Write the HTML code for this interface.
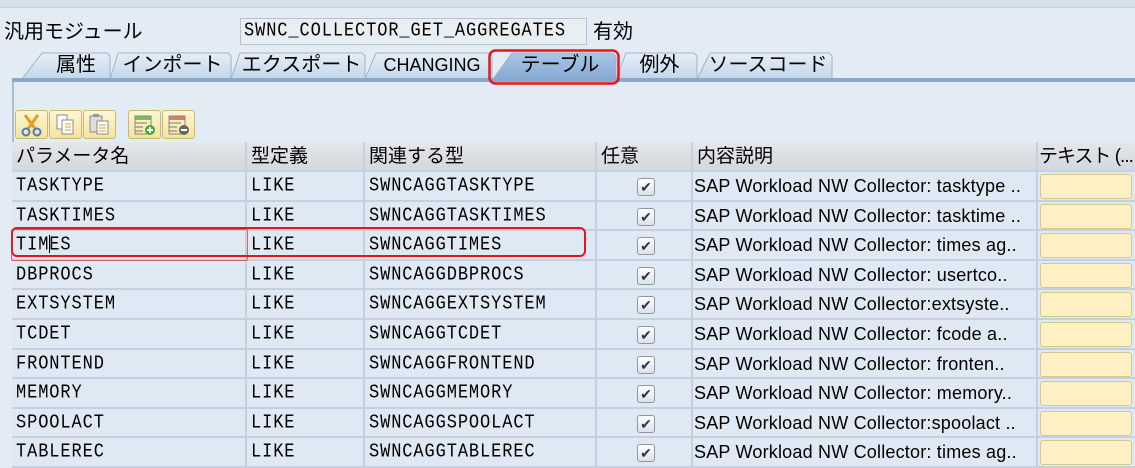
<!DOCTYPE html>
<html><head><meta charset="utf-8"><style>
*{margin:0;padding:0;box-sizing:border-box}
body{width:1135px;height:467px;overflow:hidden;background:#e3ecf5;position:relative;font-family:"Liberation Sans","Noto Sans CJK JP",sans-serif;color:#000}
.a{position:absolute;white-space:nowrap}
.mono{font-family:"Liberation Mono","Noto Sans CJK JP",monospace;font-size:17px;letter-spacing:0.9px;transform:scaleY(1.15);transform-origin:left center}
.tab{position:absolute;top:52px;height:27px;font-size:20px;line-height:27px;text-align:center}
.row{position:absolute;left:12px;width:1123px;height:29.6px;background:#dfe9f3;border-bottom:2px solid #c5d1dd}
.c{position:absolute;top:0;height:100%;border-right:2px solid #c5d1dd;line-height:28px;padding-left:4px;overflow:hidden;white-space:nowrap}
.hd .c{font-size:19px;line-height:29px;font-family:"Liberation Sans","Noto Sans CJK JP",sans-serif}
.desc{font-size:18px;letter-spacing:0.2px}
.cb{position:absolute;left:40px;top:6px;width:18px;height:18px;border:1px solid #8c97a3;border-radius:3px;background:linear-gradient(#fff,#dde2e8);font-size:14px;line-height:16px;text-align:center;color:#2a3550}
.yl{position:absolute;left:2px;top:2px;width:92px;height:25px;background:#fdf0c3;border:1px solid #d8c68a;border-radius:3px}
.btn{position:absolute;top:110px;width:33px;height:29px;background:linear-gradient(#fff7d4,#f4e3a0);border:1px solid #cdb870;border-radius:3px}
</style></head><body>
<div class="a" style="left:0;top:0;width:1135px;height:8px;background:#d5dfe9;border-bottom:1px solid #c3ced9"></div>
<div class="a" style="left:4px;top:18px;font-size:20px;line-height:28px">汎用モジュール</div>
<div class="a" style="left:240px;top:18px;width:347px;height:27px;border:1px solid #b9c3cd;background:#e9eef3"></div>
<div class="a mono" style="left:244px;top:19px;line-height:26px">SWNC_COLLECTOR_GET_AGGREGATES</div>
<div class="a" style="left:593px;top:18px;font-size:20px;line-height:28px">有効</div>

<svg class="a" style="left:0;top:0" width="1135" height="90">
<defs><linearGradient id="g" x1="0" y1="0" x2="0" y2="1"><stop offset="0" stop-color="#e6eef7"/><stop offset="1" stop-color="#c4d6ea"/></linearGradient>
<linearGradient id="g2" x1="0" y1="0" x2="0" y2="1"><stop offset="0" stop-color="#aac6e6"/><stop offset="1" stop-color="#86a9d2"/></linearGradient></defs>
<g stroke="#9fb3c8" stroke-width="1" fill="url(#g)">
<path d="M22 79 L42 53 L107 53 L110 56 L110 79Z"/>
<path d="M110 79 L118 53 L228 53 L231 56 L231 79Z"/>
<path d="M231 79 L240 53 L362 53 L365 56 L365 79Z"/>
<path d="M365 79 L376 53 L489 53 L492 56 L492 79Z"/>
<path d="M616 79 L626 53 L694 53 L697 56 L697 79Z"/>
<path d="M697 79 L710 53 L829 53 L832 56 L832 79Z"/>
<path d="M493 79 L512 53 L612 53 L616 56 L616 79Z" fill="url(#g2)"/>
</g>
<rect x="12" y="78" width="1123" height="4" fill="#88a8cc"/>
<rect x="489.5" y="50.5" width="129" height="33" rx="6" fill="none" stroke="#e8141c" stroke-width="2.5"/>
</svg>
<div class="tab" style="left:42px;width:68px">属性</div>
<div class="tab" style="left:115px;width:115px">インポート</div>
<div class="tab" style="left:238px;width:127px">エクスポート</div>
<div class="tab" style="left:374px;width:116px;font-size:18px">CHANGING</div>
<div class="tab" style="left:505px;width:110px">テーブル</div>
<div class="tab" style="left:622px;width:75px">例外</div>
<div class="tab" style="left:705px;width:126px">ソースコード</div>
<div class="a" style="left:12px;top:82px;width:2px;height:385px;background:#aabdd2"></div>

<div class="btn" style="left:15px"><svg width="31" height="27"><path d="M9 4 L20 19 M22 4 L11 19" stroke="#e0a020" stroke-width="3"/><circle cx="10" cy="21" r="3.5" fill="none" stroke="#4a7bc4" stroke-width="2"/><circle cx="21" cy="21" r="3.5" fill="none" stroke="#4a7bc4" stroke-width="2"/></svg></div>
<div class="btn" style="left:49px"><svg width="31" height="27"><rect x="7" y="4" width="10" height="14" fill="#fff" stroke="#8a8a8a"/><rect x="12" y="9" width="11" height="14" fill="#fff" stroke="#8a8a8a"/><path d="M15 13h6M15 16h6M15 19h6" stroke="#e0a020"/></svg></div>
<div class="btn" style="left:83px"><svg width="31" height="27"><rect x="6" y="5" width="12" height="16" fill="#ddd" stroke="#8a8a8a"/><rect x="9" y="3" width="6" height="3" fill="#999"/><rect x="13" y="10" width="11" height="13" fill="#fff" stroke="#8a8a8a"/><path d="M15 14h7M15 17h7M15 20h7" stroke="#e0a020"/></svg></div>
<div class="btn" style="left:128px"><svg width="31" height="27"><rect x="6" y="5" width="16" height="4" fill="#7cbf55"/><path d="M6 12h12M6 16h8M6 20h8" stroke="#777"/><rect x="6" y="5" width="16" height="18" fill="none" stroke="#888"/><circle cx="21" cy="19" r="5" fill="#4aa83a"/><path d="M18 19h6M21 16v6" stroke="#fff" stroke-width="2"/></svg></div>
<div class="btn" style="left:162px"><svg width="31" height="27"><rect x="6" y="5" width="16" height="4" fill="#e07a60"/><path d="M6 12h12M6 16h8M6 20h8" stroke="#777"/><rect x="6" y="5" width="16" height="18" fill="none" stroke="#888"/><circle cx="21" cy="19" r="5" fill="#666"/><path d="M18 19h6" stroke="#fff" stroke-width="2"/></svg></div>

<div class="row hd" style="top:142px;height:30px;background:linear-gradient(#e4e7eb,#d3d8de)">
<div class="c" style="left:0;width:235px">パラメータ名</div>
<div class="c" style="left:235px;width:118px">型定義</div>
<div class="c" style="left:353px;width:232px">関連する型</div>
<div class="c" style="left:585px;width:96px">任意</div>
<div class="c" style="left:681px;width:345px">内容説明</div>
<div class="c" style="left:1026px;width:97px;border-right:none;padding-left:1px;letter-spacing:-1px">テキスト (...</div>
</div>

<div id="rows"></div>
<script>
var d=[["TASKTYPE","SWNCAGGTASKTYPE","SAP Workload NW Collector: tasktype .."],
["TASKTIMES","SWNCAGGTASKTIMES","SAP Workload NW Collector: tasktime .."],
["TIMES","SWNCAGGTIMES","SAP Workload NW Collector: times ag.."],
["DBPROCS","SWNCAGGDBPROCS","SAP Workload NW Collector: usertco.."],
["EXTSYSTEM","SWNCAGGEXTSYSTEM","SAP Workload NW Collector:extsyste.."],
["TCDET","SWNCAGGTCDET","SAP Workload NW Collector: fcode a.."],
["FRONTEND","SWNCAGGFRONTEND","SAP Workload NW Collector: fronten.."],
["MEMORY","SWNCAGGMEMORY","SAP Workload NW Collector: memory.."],
["SPOOLACT","SWNCAGGSPOOLACT","SAP Workload NW Collector:spoolact .."],
["TABLEREC","SWNCAGGTABLEREC","SAP Workload NW Collector: times ag.."]];
var h="";
d.forEach(function(r,i){
h+='<div class="row" style="top:'+(172+i*29.6)+'px">'+
'<div class="c" style="left:0;width:235px"><span class="mono" style="display:inline-block">'+r[0]+'</span></div>'+
'<div class="c" style="left:235px;width:118px"><span class="mono" style="display:inline-block">LIKE</span></div>'+
'<div class="c" style="left:353px;width:232px"><span class="mono" style="display:inline-block">'+r[1]+'</span></div>'+
'<div class="c" style="left:585px;width:96px"><div class="cb">✔</div></div>'+
'<div class="c desc" style="left:681px;width:345px;padding-left:1px">'+r[2]+'</div>'+
'<div class="c" style="left:1026px;width:97px;border-right:none"><div class="yl"></div></div></div>';
});
document.getElementById("rows").innerHTML=h;
</script>
<div class="a" style="left:11px;top:227px;width:575px;height:30px;border:2.5px solid #e8141c;border-radius:6px"></div>
<div class="a" style="left:11px;top:229px;width:237px;height:32px;border:1px solid #c0392b;border-radius:2px;opacity:.7"></div>
<div class="a" style="left:49px;top:235px;width:1px;height:18px;background:#000"></div>
</body></html>
